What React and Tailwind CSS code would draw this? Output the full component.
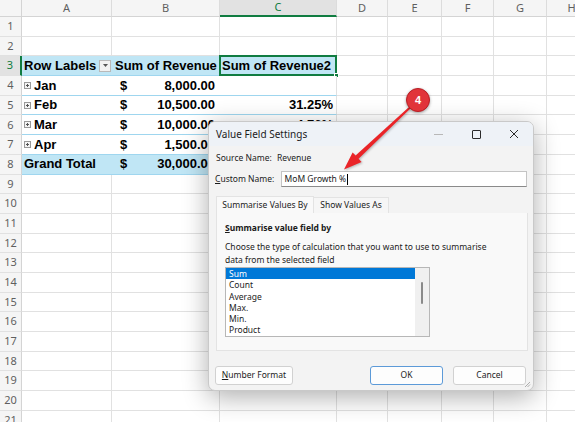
import React from "react";

const COLUMNS = [
  { id: "A", w: "w-[90px]" },
  { id: "B", w: "w-[108px]" },
  { id: "C", w: "w-[117px]" },
  { id: "D", w: "w-[51px]" },
  { id: "E", w: "w-[54px]" },
  { id: "F", w: "w-[52px]" },
  { id: "G", w: "w-[53px]" },
  { id: "H", w: "w-[50px]" },
];

const PIVOT = {
  3: { a: "Row Labels", b: "Sum of Revenue", c: "Sum of Revenue2", head: true },
  4: { a: "Jan", b: "8,000.00", c: "" },
  5: { a: "Feb", b: "10,500.00", c: "31.25%" },
  6: { a: "Mar", b: "10,000.00", c: "-4.76%" },
  7: { a: "Apr", b: "1,500.00", c: "-85.00%" },
  8: { a: "Grand Total", b: "30,000.00", c: "", total: true },
};

const CALC_TYPES = ["Sum", "Count", "Average", "Max.", "Min.", "Product"];

function ExpandBox() {
  return (
    <svg width="7" height="7" viewBox="0 0 7 7" className="mr-[3px] shrink-0">
      <rect x="0.5" y="0.5" width="6" height="6" fill="#f4f4f4" stroke="#9a9a9a" />
      <path d="M2 3.5h3M3.5 2v3" stroke="#555" strokeWidth="1" />
    </svg>
  );
}

function FilterButton() {
  return (
    <span className="w-[12px] h-[12px] shrink-0 border border-[#b9b9b9] bg-[#f1f1f1] flex items-center justify-center">
      <svg width="5" height="3" viewBox="0 0 5 3">
        <path d="M0 0h5L2.5 3z" fill="#555" />
      </svg>
    </span>
  );
}

function PivotCells({ row }) {
  const p = PIVOT[row];
  const fill = p.head || p.total ? "bg-[#c0e6f5]" : "bg-white";
  const line = "border-b border-[#9fd6ef]";
  return (
    <>
      <div className={`w-[90px] shrink-0 ${fill} ${line} flex items-center justify-between pl-[2px] pr-[1px]`}>
        <span className="flex items-center">
          {!p.head && !p.total && <ExpandBox />}
          {p.a}
        </span>
        {p.head && <FilterButton />}
      </div>
      <div className={`w-[108px] shrink-0 ${fill} ${line} flex items-center justify-between ${p.head ? "pl-[3px]" : "pl-[8px] pr-[5px]"}`}>
        {p.head ? (
          <span>{p.b}</span>
        ) : (
          <>
            <span>$</span>
            <span>{p.b}</span>
          </>
        )}
      </div>
      <div className={`relative w-[117px] shrink-0 ${fill} ${line} border-r border-r-[#e1e1e1] flex items-center ${p.head ? "pl-[2px]" : "justify-end pr-[3px]"}`}>
        {p.c}
        {p.head && (
          <>
            <span className="absolute -left-px -top-px -right-px -bottom-px border-2 border-[#107c41]" />
            <span className="absolute -right-[3px] -bottom-[3px] w-[5px] h-[5px] bg-[#107c41] border border-white" />
          </>
        )}
      </div>
    </>
  );
}

function Sheet() {
  const rows = Array.from({ length: 21 }, (_, i) => i + 1);
  return (
    <div className="flex flex-col whitespace-nowrap font-['Liberation_Sans',Arial,sans-serif]">
      <div className="flex h-[17px] bg-[#f5f5f5] text-[11px] text-[#5f5f5f] font-['Noto_Sans',sans-serif]">
        <div className="w-[22px] shrink-0 border-r border-b border-[#d4d4d4]" />
        {COLUMNS.map((c) => (
          <div
            key={c.id}
            className={`${c.w} shrink-0 flex items-center justify-center border-r border-[#dcdcdc] ${
              c.id === "C"
                ? "bg-[#e2e2e2] text-[#107c41] border-b-2 border-b-[#107c41]"
                : "border-b border-b-[#d4d4d4]"
            }`}
          >
            {c.id}
          </div>
        ))}
      </div>
      {rows.map((r) => (
        <div key={r} className="flex h-[19.7px] shrink-0 text-[13px] font-bold text-black">
          <div
            className={`w-[22px] shrink-0 flex items-center justify-center border-b border-[#e1e1e1] text-[11px] font-normal font-['Noto_Sans',sans-serif] ${
              r === 3
                ? "bg-[#e2e2e2] text-[#107c41] border-r-2 border-r-[#107c41]"
                : "bg-[#f5f5f5] text-[#5f5f5f] border-r border-r-[#d4d4d4]"
            }`}
          >
            {r}
          </div>
          {PIVOT[r] ? (
            <PivotCells row={r} />
          ) : (
            COLUMNS.slice(0, 3).map((c) => (
              <div key={c.id} className={`${c.w} shrink-0 border-r border-b border-[#e1e1e1]`} />
            ))
          )}
          {COLUMNS.slice(3).map((c) => (
            <div key={c.id} className={`${c.w} shrink-0 border-r border-b border-[#e1e1e1]`} />
          ))}
        </div>
      ))}
    </div>
  );
}

function Dialog() {
  return (
    <div className="absolute left-[208px] top-[121px] w-[326px] h-[270px] rounded-[7px] bg-[#f3f3f3] border border-[#c9c9c9] shadow-[0_6px_26px_rgba(0,0,0,0.32)] overflow-hidden whitespace-nowrap font-['Noto_Sans',sans-serif] text-[#1b1b1b] flex flex-col">
      <div className="h-[24px] bg-[#eef2f7] flex items-center justify-between">
        <span className="pl-[7px] text-[10px]">Value Field Settings</span>
        <div className="flex h-full">
          <span className="w-[38px] flex items-center justify-center">
            <span className="w-[9px] h-px bg-[#b8b8b8]" />
          </span>
          <span className="w-[38px] flex items-center justify-center">
            <span className="w-[9px] h-[9px] border border-[#2b2b2b] rounded-[1px]" />
          </span>
          <span className="w-[38px] flex items-center justify-center">
            <svg width="10" height="10" viewBox="0 0 10 10">
              <path d="M1 1l8 8M9 1l-8 8" stroke="#2b2b2b" strokeWidth="1" />
            </svg>
          </span>
        </div>
      </div>

      <div className="px-[6px] pt-[6px] flex flex-col text-[8.5px]">
        <div className="h-[13px] flex items-center">
          <span className="w-[62px] pl-px">Source Name:</span>
          <span>Revenue</span>
        </div>
        <div className="mt-[6px] h-[16px] flex items-center">
          <span className="w-[66px]">
            <span className="underline">C</span>ustom Name:
          </span>
          <div className="w-[248px] h-[16px] bg-white border border-[#c4c4c4] border-b-[#8a8a8a] flex items-center pl-[3px]">
            MoM Growth %<span className="w-px h-[11px] bg-black ml-px" />
          </div>
        </div>

        <div className="mt-[9px] ml-px flex h-[17px]">
          <div className="w-[98px] bg-[#f9f9f9] border border-b-0 border-[#e3e3e3] flex items-center justify-center">
            Summarise Values By
          </div>
          <div className="w-[75px] mt-px bg-[#f6f6f6] border border-l-0 border-b-0 border-[#e3e3e3] flex items-center justify-center">
            Show Values As
          </div>
        </div>
        <div className="ml-px w-[312px] h-[138px] bg-[#f9f9f9] border border-t-0 border-[#e3e3e3] px-[8px] pt-[9px] flex flex-col">
          <div className="h-[12px] font-bold leading-[12px]">
            <span className="underline">S</span>ummarise value field by
          </div>
          <div className="mt-[6px] leading-[13px]">
            Choose the type of calculation that you want to use to summarise
            <br />
            data from the selected field
          </div>
          <div className="mt-[1px] w-[205px] h-[70px] bg-white border border-[#b7b7b7] flex">
            <div className="flex-1 flex flex-col">
              {CALC_TYPES.map((t, i) => (
                <div
                  key={t}
                  className={`h-[11.3px] leading-[11.3px] pl-[3px] ${i === 0 ? "bg-[#0078d7] text-white" : ""}`}
                >
                  {t}
                </div>
              ))}
            </div>
            <div className="w-[14px] bg-[#f0f0f0] flex justify-center">
              <span className="mt-[14px] w-[2px] h-[22px] rounded-full bg-[#8a8a8a]" />
            </div>
          </div>
        </div>

        <div className="mt-[15px] h-[19px] flex items-center">
          <button className="w-[78px] h-[19px] bg-[#fdfdfd] border border-[#d1d1d1] rounded-[3px]">
            <span className="underline">N</span>umber Format
          </button>
          <div className="flex-1" />
          <button className="w-[73px] h-[19px] bg-[#fdfdfd] border-[1.5px] border-[#5c9ad8] rounded-[3px]">
            OK
          </button>
          <button className="ml-[10px] mr-[1px] w-[73px] h-[19px] bg-[#fdfdfd] border border-[#d1d1d1] rounded-[3px]">
            Cancel
          </button>
        </div>
      </div>

      <svg width="7" height="7" viewBox="0 0 7 7" className="absolute right-[2px] bottom-[2px]">
        <path d="M6 1L1 6M6 3.5L3.5 6" stroke="#9a9a9a" strokeWidth="0.8" />
      </svg>
    </div>
  );
}

function Callout() {
  return (
    <>
      <svg
        width="575"
        height="422"
        viewBox="0 0 575 422"
        className="absolute inset-0 pointer-events-none drop-shadow-[1px_1px_1px_rgba(0,0,0,0.25)]"
      >
        <polygon
          points="344,169.5 361.6,161.9 358.6,158.8 410.7,108.2 409.3,106.8 355.6,155.6 352.6,152.5"
          fill="#ea2428"
        />
      </svg>
      <div className="absolute left-[406px] top-[88px] w-[24px] h-[24px] rounded-full bg-[#e1343a] border-[1.5px] border-[#b81e24] shadow-[0_1px_3px_rgba(0,0,0,0.35)] flex items-center justify-center text-white text-[11px] font-bold font-['Liberation_Sans',Arial,sans-serif]">
        4
      </div>
    </>
  );
}

export default function App() {
  return (
    <div className="relative w-[575px] h-[422px] overflow-hidden bg-white">
      <Sheet />
      <Dialog />
      <Callout />
    </div>
  );
}
